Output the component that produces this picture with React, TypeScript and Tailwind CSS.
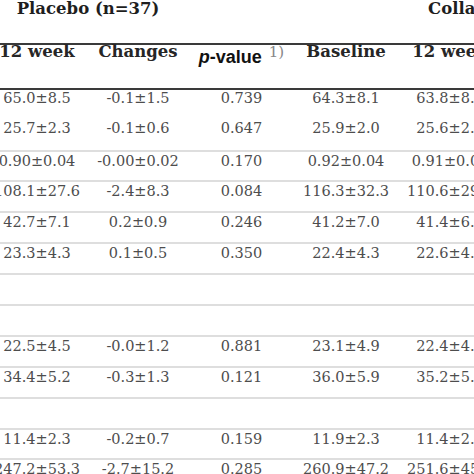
const rows: (string[] | null)[] = [
  ["65.0±8.5", "-0.1±1.5", "0.739", "64.3±8.1", "63.8±8.5"],
  ["25.7±2.3", "-0.1±0.6", "0.647", "25.9±2.0", "25.6±2.1"],
  ["0.90±0.04", "-0.00±0.02", "0.170", "0.92±0.04", "0.91±0.04"],
  ["108.1±27.6", "-2.4±8.3", "0.084", "116.3±32.3", "110.6±29.5"],
  ["42.7±7.1", "0.2±0.9", "0.246", "41.2±7.0", "41.4±6.9"],
  ["23.3±4.3", "0.1±0.5", "0.350", "22.4±4.3", "22.6±4.4"],
  null,
  null,
  ["22.5±4.5", "-0.0±1.2", "0.881", "23.1±4.9", "22.4±4.6"],
  ["34.4±5.2", "-0.3±1.3", "0.121", "36.0±5.9", "35.2±5.7"],
  null,
  ["11.4±2.3", "-0.2±0.7", "0.159", "11.9±2.3", "11.4±2.2"],
  ["247.2±53.3", "-2.7±15.2", "0.285", "260.9±47.2", "251.6±45.8"],
];

const widths = ["w-[100px]", "w-[102px]", "w-[105px]", "w-[104px]", "w-[104px]"];

const Cell = ({ w, children }: { w: string; children?: React.ReactNode }) => (
  <div className={`${w} shrink-0 text-center whitespace-nowrap`}>{children}</div>
);

export default function App() {
  return (
    <div className="w-[474px] h-[474px] overflow-hidden bg-white font-['DejaVu_Serif',serif]">
      <div className="w-[640px] -ml-[13px]">
        {/* group titles */}
        <div className="h-[43px] flex text-[16.5px] font-bold leading-[17px] text-[#1e1e1e]">
          <div className="w-[202px] shrink-0 text-center">Placebo (n=37)</div>
          <div className="pl-[239px] whitespace-nowrap">Collagen (n=37)</div>
        </div>
        <div className="h-[2px] bg-[#3a3a3a]" />
        <div className="h-[43px] flex text-[16.5px] font-bold leading-[14px] text-[#262626]">
          <Cell w={widths[0]}>12 week</Cell>
          <Cell w={widths[1]}>Changes</Cell>
          <div className={`${widths[2]} shrink-0 text-center whitespace-nowrap`}>
            <span className="inline-block pt-[5px] font-['Liberation_Sans',sans-serif] text-[18px] text-[#111]">
              <i>p</i>-value
            </span>
            <span className="ml-[7px] align-top font-normal text-[15px] text-[#888]">1)</span>
          </div>
          <Cell w={widths[3]}>Baseline</Cell>
          <Cell w={widths[4]}>12 week</Cell>
        </div>
        <div className="h-[1.5px] bg-[#3a3a3a]" />
        <div className="text-[14.5px] leading-[16px] text-[#4d4d4d]">
          {rows.map((r, i) => (
            <div
              key={i}
              className={
                i < 2
                  ? "h-[30px] flex"
                  : "h-[30.9px] flex border-t-2 border-[#dedede] pt-[1px]"
              }
            >
              {r && r.map((v, j) => <Cell key={j} w={widths[j]}>{v}</Cell>)}
            </div>
          ))}
        </div>
      </div>
    </div>
  );
}
